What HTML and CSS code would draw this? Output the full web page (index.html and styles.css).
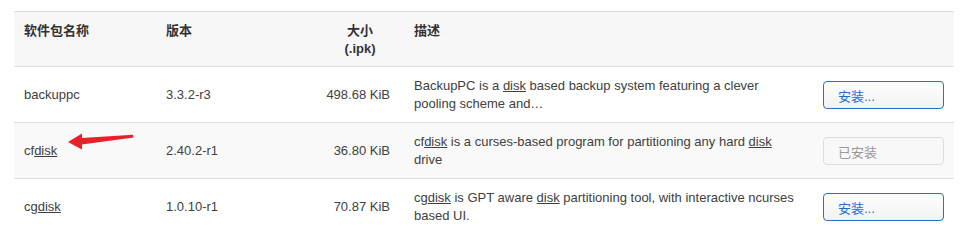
FILE: index.html
```html
<!DOCTYPE html>
<html lang="zh-CN">

<head>
    <meta charset="UTF-8">
    <title>软件包</title>
    <link rel="stylesheet" href="styles.css">
</head>

<body>
    <div class="wrap">
        <table class="pkg-table">
            <thead>
                <tr>
                    <th class="col-name">软件包名称</th>
                    <th class="col-ver">版本</th>
                    <th class="col-size center">大小<br>(.ipk)</th>
                    <th class="col-desc">描述</th>
                    <th class="col-act"></th>
                </tr>
            </thead>
            <tbody>
                <tr>
                    <td>backuppc</td>
                    <td>3.3.2-r3</td>
                    <td class="num">498.68 KiB</td>
                    <td>BackupPC is a <u>disk</u> based backup system featuring a clever pooling scheme and…</td>
                    <td><button class="btn btn-action">安装...</button></td>
                </tr>
                <tr class="odd">
                    <td>cf<u>disk</u></td>
                    <td>2.40.2-r1</td>
                    <td class="num">36.80 KiB</td>
                    <td>cf<u>disk</u> is a curses-based program for partitioning any hard <u>disk</u> drive</td>
                    <td><button class="btn" disabled>已安装</button></td>
                </tr>
                <tr>
                    <td>cg<u>disk</u></td>
                    <td>1.0.10-r1</td>
                    <td class="num">70.87 KiB</td>
                    <td>cg<u>disk</u> is GPT aware <u>disk</u> partitioning tool, with interactive ncurses based UI.</td>
                    <td><button class="btn btn-action">安装...</button></td>
                </tr>
            </tbody>
        </table>

        <!-- red annotation arrow pointing at cfdisk -->
        <svg class="arrow" width="80" height="24" viewBox="0 0 80 24">
            <path d="M1 14 L15 5.5 L15 10 L66 6.8 L66.6 9.4 L15 16.5 L15 21.5 Z" fill="#e8202a" />
        </svg>
    </div>
</body>

</html>
```

FILE: styles.css
```css
body {
    margin: 0;
    padding: 0;
    background-color: #fff;
    font-family: "Liberation Sans", Arial, "Noto Sans CJK SC", sans-serif;
    font-size: 13px;
    line-height: 18px;
    color: #404040;
}

.wrap {
    position: relative;
    padding: 11px 9px 0 14px;
}

.pkg-table {
    width: 940px;
    border-collapse: collapse;
    table-layout: fixed;
    border-top: 1px solid #ddd;
}

.pkg-table th,
.pkg-table td {
    padding: 10px 10px 9px;
    text-align: left;
    border-bottom: 1px solid #ddd;
}

.pkg-table th {
    padding-bottom: 8px;
    vertical-align: top;
    font-weight: bold;
    background-color: #f7f7f7;
    color: #333;
}

.pkg-table td {
    vertical-align: middle;
}

.pkg-table tr.odd td {
    background-color: #f9f9f9;
}

.pkg-table th.center {
    text-align: center;
}

.pkg-table td.num {
    text-align: right;
    padding-right: 14px;
}

.col-name {
    width: 122px;
}

.col-ver {
    width: 140px;
}

.col-size {
    width: 68px;
}

.col-desc {
    width: 389px;
}

u {
    text-decoration: underline;
}

.btn {
    display: block;
    width: 121px;
    height: 28px;
    padding: 0 14px;
    text-align: left;
    font-family: inherit;
    font-size: 13px;
    color: #404040;
    background: linear-gradient(#fff, #f2f2f2);
    border: 1px solid #ccc;
    border-radius: 4px;
    cursor: pointer;
}

.btn-action {
    color: #1a6fd1;
    border-color: #1f72d6;
}

.btn:disabled {
    color: #999;
    background: #f8f8f8;
    border-color: #ddd;
    cursor: default;
}

.arrow {
    position: absolute;
    left: 67px;
    top: 128px;
}
```
